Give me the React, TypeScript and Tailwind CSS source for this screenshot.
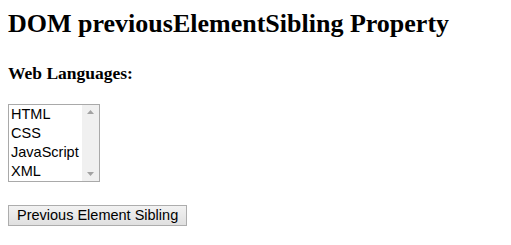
import React from "react";

export default function App() {
  const items = ["HTML", "CSS", "JavaScript", "XML"];
  return (
    <div className="p-2 bg-white text-black min-h-[245px]" style={{ fontFamily: '"Liberation Serif", serif' }}>
      <h1 className="text-[26px] font-bold leading-[30px] mt-[1px] mb-0">DOM previousElementSibling Property</h1>
      <h3 className="text-[17.5px] font-bold leading-[20px] mt-[24px] mb-0">Web Languages:</h3>
      <div className="mt-[21px] flex w-[92px] h-[78px] border border-[#a9a9a9] bg-white" style={{ fontFamily: '"Liberation Sans", Arial, sans-serif' }}>
        <div className="flex-1 flex flex-col pl-[2px] pt-0 text-[14.5px] leading-[19px] text-black">
          {items.map((it) => (
            <div key={it}>{it}</div>
          ))}
        </div>
        <div className="w-[17px] bg-[#f0f0f0] flex flex-col justify-between items-center py-[5px]">
          <svg width="7" height="4" viewBox="0 0 7 4"><path d="M3.5 0 L7 4 L0 4 Z" fill="#a3a3a3" /></svg>
          <svg width="7" height="4" viewBox="0 0 7 4"><path d="M0 0 L7 0 L3.5 4 Z" fill="#a3a3a3" /></svg>
        </div>
      </div>
      <button
        className="mt-[23px] h-[21px] px-[8px] border border-[#adadad] bg-gradient-to-b from-[#f2f2f2] to-[#e0e0e0] text-[14.5px] leading-[19px] text-black"
        style={{ fontFamily: '"Liberation Sans", Arial, sans-serif' }}
      >
        Previous Element Sibling
      </button>
    </div>
  );
}
